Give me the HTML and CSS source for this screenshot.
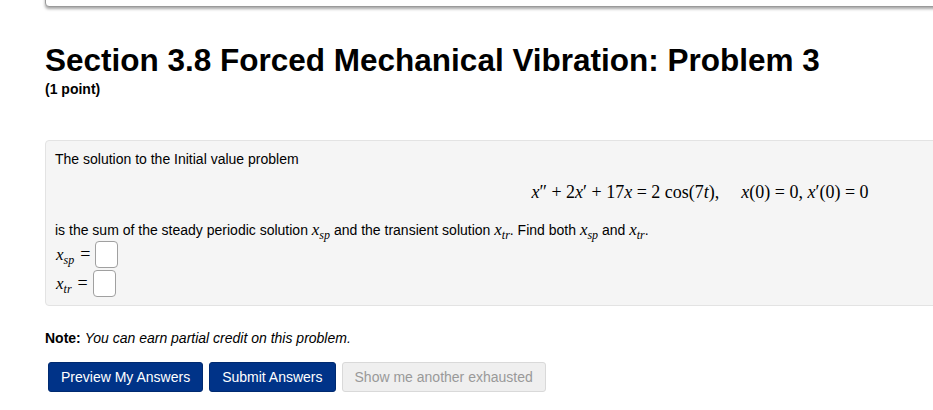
FILE: index.html
```html
<!DOCTYPE html>
<html>
<head>
<meta charset="utf-8">
<link rel="stylesheet" href="styles.css">
</head>
<body>
<div class="page">
  <div class="topcard"></div>
  <h1 class="title">Section 3.8 Forced Mechanical Vibration: Problem 3</h1>
  <div class="points">(1 point)</div>
  <div class="problem">
    <p class="line first">The solution to the Initial value problem</p>
    <div class="display"><span class="m">x</span>″ + 2<span class="m">x</span>′ + 17<span class="m">x</span> = 2 cos(7<span class="m">t</span>),<span class="sp"></span><span class="m">x</span>(0) = 0, <span class="m">x</span>′(0) = 0</div>
    <p class="line">is the sum of the steady periodic solution <span class="mi"><span class="m">x</span><sub class="m">sp</sub></span> and the transient solution <span class="mi"><span class="m">x</span><sub class="m">tr</sub></span>. Find both <span class="mi"><span class="m">x</span><sub class="m">sp</sub></span> and <span class="mi"><span class="m">x</span><sub class="m">tr</sub></span>.</p>
    <div class="ans first-ans"><span class="mi lbl"><span class="m">x</span><sub class="m">sp</sub></span><span class="eq">=</span><span class="box"></span></div>
    <div class="ans"><span class="mi lbl"><span class="m">x</span><sub class="m">tr</sub></span><span class="eq">=</span><span class="box"></span></div>
  </div>
  <p class="note"><b>Note:</b> <i>You can earn partial credit on this problem.</i></p>
  <div class="buttons">
    <button class="btn primary">Preview My Answers</button>
    <button class="btn primary">Submit Answers</button>
    <button class="btn disabled">Show me another exhausted</button>
  </div>
</div>
</body>
</html>
```
FILE: styles.css
```css
html, body { margin: 0; padding: 0; background: #fff; overflow: hidden; }
body { font-family: "Liberation Sans", Arial, sans-serif; color: #000; width: 933px; height: 410px; }
.page { padding-left: 45px; }
.topcard {
  margin-top: -20px;
  height: 25px;
  width: 1000px;
  border: 1px solid #9a9a9a;
  border-radius: 4px;
  box-shadow: 0 2px 3px rgba(0,0,0,0.35);
  background: #fff;
}
.title {
  margin: 35px 0 0 0;
  font-size: 31.5px;
  font-weight: bold;
  line-height: 36px;
}
.points { font-size: 14px; font-weight: bold; margin-top: 3px; line-height: 16px; }
.problem {
  margin-top: 43px;
  width: 1310px;
  box-sizing: border-box;
  background: #f5f5f5;
  border: 1px solid #e3e3e3;
  border-radius: 4px;
  padding: 8px 9px 8px 9px;
  font-size: 14px;
}
.line { margin: 0; line-height: 20px; }
.display {
  text-align: center;
  font-family: "Liberation Serif", "Times New Roman", serif;
  font-size: 18px;
  margin: 11px 0 16px 0;
  line-height: 24px;
}
.m { font-family: "Liberation Serif", "Times New Roman", serif; font-style: italic; }
.mi { font-size: 17px; line-height: 1; }
.mi sub { font-size: 12px; line-height: 0; }
.sp { display: inline-block; width: 22px; }
.ans { display: flex; align-items: center; height: 28px; margin-left: 1px; }
.ans + .ans { margin-top: 1px; }
.eq { font-family: "Liberation Serif", serif; font-size: 18px; margin: 0 5px 0 6px; }
.box {
  display: inline-block;
  box-sizing: border-box;
  width: 23px;
  height: 27px;
  background: #fff;
  border: 1px solid #a0a0a0;
  border-radius: 4px;
}
.note { font-size: 14px; margin: 22px 0 0 0; line-height: 20px; }
.buttons { display: flex; gap: 6px; margin-top: 14px; margin-left: 3px; }
.btn {
  font-family: "Liberation Sans", Arial, sans-serif;
  font-size: 14px;
  height: 30px;
  padding: 0 12px;
  border-radius: 3px;
  border: 1px solid #002a70;
}
.primary { background: #003388; color: #fff; }
.disabled { background: #efefef; color: #999; border-color: #d9d9d9; }
```
